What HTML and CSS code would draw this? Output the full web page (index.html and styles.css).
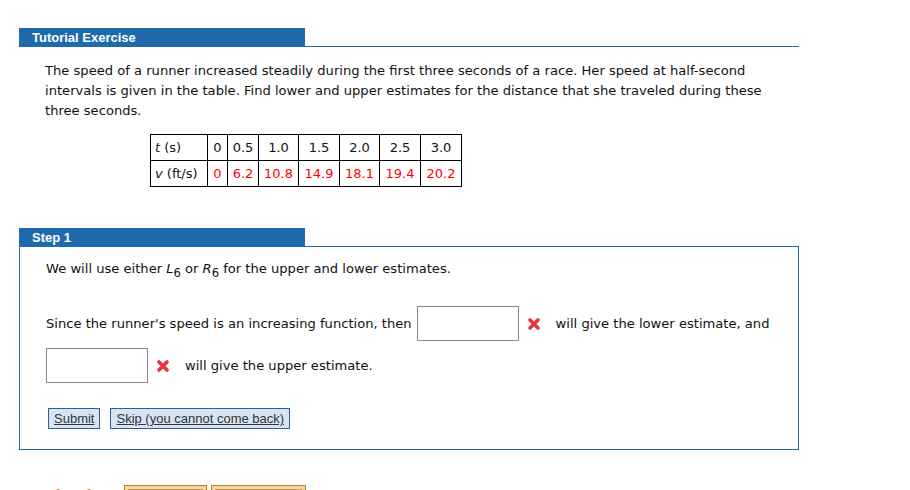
FILE: index.html
```html
<!DOCTYPE html>
<html lang="en">
<head>
  <meta charset="UTF-8">
  <title>Tutorial Exercise</title>
  <link rel="stylesheet" href="styles.css">
</head>
<body>
  <div class="page">
    <div class="section-head">
      <div class="tab">Tutorial Exercise</div>
      <div class="rule"></div>
    </div>
    <p class="question">
      The speed of a runner increased steadily during the first three seconds of a race. Her speed at half-second
      intervals is given in the table. Find lower and upper estimates for the distance that she traveled during these
      three seconds.
    </p>
    <table class="data">
      <colgroup>
        <col style="width:57px"><col style="width:20px"><col style="width:31px"><col style="width:40px">
        <col style="width:41px"><col style="width:40px"><col style="width:41px"><col style="width:41px">
      </colgroup>
      <tr>
        <td class="label"><i>t</i> (s)</td>
        <td>0</td><td>0.5</td><td>1.0</td><td>1.5</td><td>2.0</td><td>2.5</td><td>3.0</td>
      </tr>
      <tr class="vals">
        <td class="label"><i>v</i> (ft/s)</td>
        <td>0</td><td>6.2</td><td>10.8</td><td>14.9</td><td>18.1</td><td>19.4</td><td>20.2</td>
      </tr>
    </table>

    <div class="section-head step-head">
      <div class="tab">Step 1</div>
      <div class="rule"></div>
    </div>
    <div class="step-box">
      <p class="intro">We will use either <i>L</i><sub>6</sub> or <i>R</i><sub>6</sub> for the upper and lower estimates.</p>
      <div class="answer-row">
        <span>Since the runner's speed is an increasing function, then</span>
        <input class="blank" type="text">
        <svg class="wrong" width="14" height="14" viewBox="0 0 14 14"><path d="M3 3 L11 11 M11 3 L3 11" stroke="#e8343c" stroke-width="3.6" stroke-linecap="round"/></svg>
        <span>will give the lower estimate, and</span>
      </div>
      <div class="answer-row">
        <input class="blank" type="text">
        <svg class="wrong" width="14" height="14" viewBox="0 0 14 14"><path d="M3 3 L11 11 M11 3 L3 11" stroke="#e8343c" stroke-width="3.6" stroke-linecap="round"/></svg>
        <span>will give the upper estimate.</span>
      </div>
      <div class="actions">
        <button class="step-btn">Submit</button>
        <button class="step-btn">Skip (you cannot come back)</button>
      </div>
    </div>

    <div class="help">
      <span class="help-label">Need Help?</span>
      <button class="help-btn">Read It</button>
      <button class="help-btn wide">Watch It</button>
    </div>
  </div>
</body>
</html>
```

FILE: styles.css
```css
body {
  margin: 0;
  font-family: 'DejaVu Sans', Verdana, sans-serif;
  font-size: 13.1px;
  color: #111;
  background: #fff;
}

.page {
  width: 780px;
  margin-left: 19px;
  padding-top: 28px;
}

.section-head {
  display: flex;
  align-items: flex-end;
}

.tab {
  width: 273px;
  height: 19px;
  line-height: 19px;
  padding-left: 13px;
  background: #1f69ad;
  color: #fff;
  font-family: 'Liberation Sans', Arial, sans-serif;
  font-weight: bold;
  font-size: 13px;
}

.rule {
  flex: 1;
  border-bottom: 1px solid #1f69ad;
}

.question {
  margin: 14px 0 0 26px;
  width: 728px;
  line-height: 20px;
}

table.data {
  border-collapse: collapse;
  margin: 13px 0 0 131px;
  table-layout: fixed;
  font-size: 13px;
}

table.data td {
  border: 1px solid #000;
  height: 25px;
  padding: 0;
  text-align: center;
}

table.data td.label {
  text-align: left;
  padding-left: 4px;
}

table.data .vals td {
  color: #f00;
}

table.data .vals td.label {
  color: #111;
}

.step-head {
  margin-top: 41px;
}

.step-box {
  border: 1px solid #1f69ad;
  border-top: none;
  height: 203px;
  padding: 12px 0 0 26px;
  box-sizing: border-box;
}

.intro {
  margin: 0;
  line-height: 20px;
}

.intro sub {
  font-size: 11.5px;
  line-height: 0;
}

.answer-row {
  display: flex;
  align-items: center;
  margin-top: 27px;
}

.answer-row + .answer-row {
  margin-top: 7px;
}

.blank {
  width: 102px;
  height: 35px;
  box-sizing: border-box;
  border: 1px solid #8a8a8a;
  margin: 0 8px 0 5px;
  padding: 0;
}

.answer-row .blank:first-child {
  margin-left: 0;
}

.wrong {
  margin-right: 15px;
}

.actions {
  display: flex;
  gap: 10px;
  margin-top: 25px;
  margin-left: 2px;
}

.step-btn {
  height: 21px;
  padding: 0 5px;
  background: #d6e5f1;
  border: 1px solid #2a5f9b;
  border-radius: 0;
  color: #333;
  font-family: 'Liberation Sans', Arial, sans-serif;
  font-size: 13px;
  text-decoration: underline;
}

.help {
  display: flex;
  align-items: flex-start;
  margin-top: 35px;
  margin-left: 1px;
}

.help-label {
  width: 104px;
  color: #e98514;
  font-weight: bold;
  font-family: 'DejaVu Sans', Verdana, sans-serif;
  font-size: 14px;
  margin-top: 2px;
}

.help-btn {
  width: 83px;
  height: 22px;
  margin-right: 4px;
  background: #fbd4a4;
  border: 1px solid #c87c20;
  box-shadow: inset 0 0 0 3px #fbd4a4, inset 0 0 0 4px #c9975a;
}

.help-btn.wide {
  width: 95px;
}
```
